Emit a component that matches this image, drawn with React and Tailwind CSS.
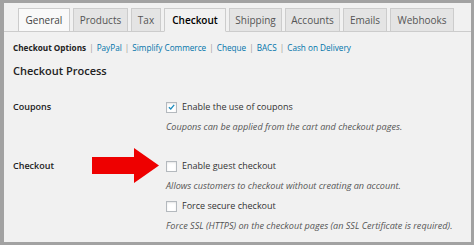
import React from "react";

const tabs = [
  ["General", "w-[52px]"],
  ["Products", "w-[55px]"],
  ["Tax", "w-[30px]"],
  ["Checkout", "w-[62px]"],
  ["Shipping", "w-[53px]"],
  ["Accounts", "w-[55px]"],
  ["Emails", "w-[44px]"],
  ["Webhooks", "w-[64px]"],
];
const links = ["PayPal", "Simplify Commerce", "Cheque", "BACS", "Cash on Delivery"];

function Box({ checked }) {
  return (
    <span className="w-[11px] h-[11px] shrink-0 bg-white border border-[#b4b9be] shadow-[inset_0_1px_2px_rgba(0,0,0,0.1)] flex items-center justify-center">
      {checked && (
        <svg viewBox="0 0 12 12" className="w-[10px] h-[10px]">
          <path d="M2.5 6.2 L5 8.6 L9.6 3.2" fill="none" stroke="#1e8cbe" strokeWidth="1.8" />
        </svg>
      )}
    </span>
  );
}

function Option({ checked, label, desc }) {
  return (
    <div>
      <div className="flex items-center gap-[5px] h-[12px]">
        <Box checked={checked} />
        <span className="text-[9px] text-[#333]">{label}</span>
      </div>
      <p className="mt-[8px] text-[9.1px] italic text-[#555] leading-[12px]">{desc}</p>
    </div>
  );
}

export default function App() {
  return (
    <div
      className="w-[474px] h-[245px] bg-[#f1f1f1] border-[3px] border-l-[4px] border-[#a2a2a2] overflow-hidden relative"
      style={{ fontFamily: '"Open Sans", "Liberation Sans", sans-serif' }}
    >
      <div className="flex gap-[3px] pl-[14px] pt-[5px] border-b border-[#cccccc]">
        {tabs.map(([t, w]) => (
          <div
            key={t}
            className={`${w} h-[24px] -mb-px flex items-center justify-center border border-[#cccccc] text-[10px] ${
              t === "Checkout"
                ? "bg-[#f1f1f1] border-b-[#f1f1f1] text-black font-semibold"
                : t === "General"
                ? "bg-[#f9f9f9] border-b-[#cccccc] text-[#444]"
                : "bg-[#e4e4e4] text-[#555]"
            }`}
          >
            {t}
          </div>
        ))}
      </div>

      <div className="pl-[9px] pr-[6px]">
        <div className="mt-[10px] flex items-center text-[8.2px] h-[12px]">
          <span className="font-bold text-[#222]">Checkout Options</span>
          {links.map((l) => (
            <span key={l} className="text-[#0073aa]">
              <span className="text-[#999] mx-[3px]">|</span>
              {l}
            </span>
          ))}
        </div>

        <h2 className="mt-[9px] text-[11px] font-semibold text-[#222] leading-[16px]">Checkout Process</h2>

        <div className="mt-[22px] flex">
          <div className="w-[153px] shrink-0 text-[9px] font-semibold text-[#222] h-[12px] flex items-center">Coupons</div>
          <Option checked label="Enable the use of coupons" desc="Coupons can be applied from the cart and checkout pages." />
        </div>

        <div className="mt-[27px] flex relative">
          <div className="w-[153px] shrink-0 text-[9px] font-semibold text-[#222] h-[12px] flex items-center">Checkout</div>
          <div className="flex flex-col gap-[8px]">
            <Option label="Enable guest checkout" desc="Allows customers to checkout without creating an account." />
            <Option label="Force secure checkout" desc="Force SSL (HTTPS) on the checkout pages (an SSL Certificate is required)." />
          </div>
          <svg className="absolute left-[79px] top-[-12px]" width="70" height="38" viewBox="0 0 70 38">
            <polygon points="0,9 42,9 42,0 67,17.5 42,35 42,26 0,26" fill="#ee0000" />
          </svg>
        </div>
      </div>
    </div>
  );
}
